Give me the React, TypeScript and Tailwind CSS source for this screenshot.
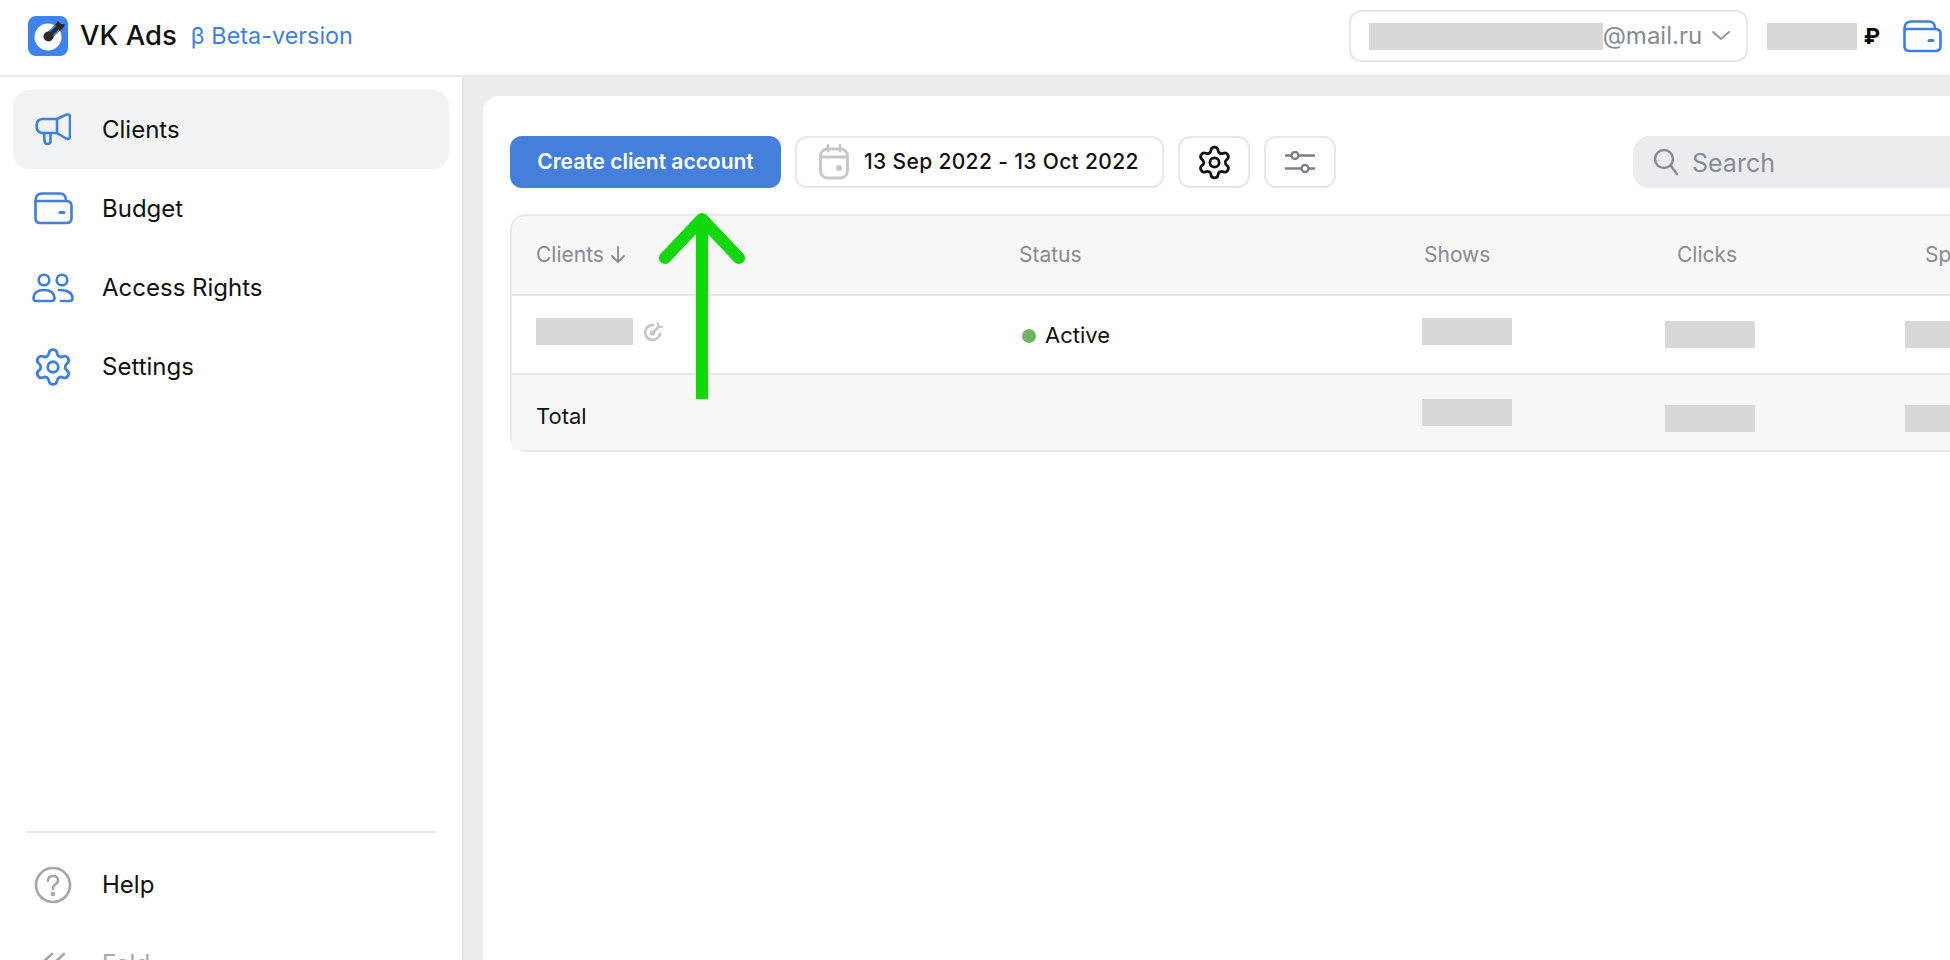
import React from "react";
import { Settings } from "lucide-react";

const Blue = "#3f7fe0";

function Logo() {
  return (
    <svg width="40" height="40" viewBox="0 0 40 40">
      <rect width="40" height="40" rx="8" fill="#3f84ec" />
      <circle cx="20" cy="21" r="13.5" fill="#fff" />
      <path d="M22 19 L33 8" stroke="#3f84ec" strokeWidth="8" />
      <path d="M21 20 L31 10" stroke="#2a2a2a" strokeWidth="4" strokeLinecap="round" />
      <circle cx="20.500" cy="20.500" r="5" fill="#2a2a2a" />
      <path d="M27 9 L30 5 L33 8 L37 8 L36 11 L32 15 Z" fill="#2a2a2a" />
    </svg>
  );
}

function Megaphone() {
  return (
    <svg width="36" height="33" viewBox="0 0 36 33" fill="none" stroke={Blue} strokeWidth="2.600" strokeLinejoin="round" strokeLinecap="round">
      <path d="M22 6 L31 1.800 Q35 0.500 35 4 V23 Q35 27 31 25.500 L22 20 Z" />
      <path d="M22 6 H8 Q1.500 6 1.500 13 Q1.500 20 8 20 H22" />
      <path d="M9 20 L9.500 28 Q10 31 12.500 31 Q15.500 31 15.500 28 L15.500 21" />
    </svg>
  );
}

function Wallet() {
  return (
    <svg width="39" height="33" viewBox="0 0 39 33" fill="none" stroke={Blue} strokeWidth="2.600" strokeLinejoin="round" strokeLinecap="round">
      <path d="M1.500 9 V26 Q1.500 31 6.500 31 H32.500 Q37.500 31 37.500 26 V14 Q37.500 9 32.500 9 H1.500" />
      <path d="M1.500 9 Q1.500 1.500 8 1.500 H26 Q32 1.500 32 9" />
      <path d="M26 20.500 H30" strokeWidth="3" />
    </svg>
  );
}

function People() {
  return (
    <svg width="42" height="30" viewBox="0 0 42 30" fill="none" stroke={Blue} strokeWidth="2.600" strokeLinecap="round" strokeLinejoin="round">
      <circle cx="12" cy="7" r="5.300" />
      <circle cx="30" cy="7" r="5.300" />
      <path d="M1.500 25 Q2 17 12 17 Q22 17 22.500 25 Q22.500 28 20 28 H4 Q1.500 28 1.500 25 Z" />
      <path d="M27 17 Q40 17 40.500 25 Q40.500 28 38 28 H29" />
    </svg>
  );
}

function Target() {
  return (
    <svg width="20" height="20" viewBox="0 0 20 20" fill="none" stroke="#c4c6ca" strokeWidth="2.800" strokeLinecap="round">
      <path d="M10 3 A7.500 7.500 0 1 0 17 12" />
      <circle cx="9.500" cy="11" r="2.800" fill="#c4c6ca" stroke="none" />
      <path d="M9.500 11 L16 4.500" />
      <path d="M15 1 L15.500 4.500 L19 5" strokeWidth="2" />
    </svg>
  );
}

function NavItem({ icon, label, active, muted }: { icon: React.ReactNode; label: string; active?: boolean; muted?: boolean }) {
  return (
    <div className={`flex h-[79px] shrink-0 items-center rounded-2xl pl-[19px] ${active ? "bg-[#f1f2f4]" : ""}`}>
      <div className="flex w-[42px] justify-center">{icon}</div>
      <span className={`ml-[28px] text-[24px] ${muted ? "text-[#a3a7ae]" : "text-[#111]"}`}>{label}</span>
    </div>
  );
}

function Redact({ className }: { className: string }) {
  return <div className={`h-[27px] shrink-0 bg-[#d8d8d8] ${className}`} />;
}

function Outline({ className, children }: { className: string; children: React.ReactNode }) {
  return <div className={`flex h-[52px] shrink-0 items-center rounded-xl border-2 border-[#e6e7eb] bg-white ${className}`}>{children}</div>;
}

const rowGrid = "grid grid-cols-[483px_405px_253px_248px_300px] items-center";

export default function App() {
  return (
    <div className="relative flex h-[960px] w-[1950px] flex-col overflow-hidden bg-white font-['Inter',sans-serif]">
      <header className="flex h-[77px] shrink-0 items-center border-b-2 border-[#e9eaee] bg-white pb-[3px] pl-7">
        <Logo />
        <span className="ml-[12px] text-[27.5px] font-medium text-[#111]">VK Ads</span>
        <span className="ml-[14px] text-[23.4px] text-[#3f7fe0]">β Beta-version</span>
        <Outline className="ml-auto w-[399px] pl-[18px]">
          <Redact className="w-[234px]" />
          <span className="text-[24px] text-[#868b94]">@mail.ru</span>
          <svg className="ml-[10px]" width="18" height="10" viewBox="0 0 18 10" fill="none" stroke="#8f939a" strokeWidth="1.800" strokeLinecap="round" strokeLinejoin="round">
            <path d="M1 1 L9 8 L17 1" />
          </svg>
        </Outline>
        <Redact className="ml-[19px] w-[90px]" />
        <span className="ml-[7px] text-[22px] font-bold text-black">₽</span>
        <div className="ml-[23px] mr-2">
          <Wallet />
        </div>
      </header>

      <div className="flex min-h-0 flex-1">
        <aside className="flex w-[464px] shrink-0 flex-col border-r-2 border-[#e3e4e9] bg-white px-[13px] pt-[13px]">
          <NavItem active icon={<Megaphone />} label="Clients" />
          <NavItem icon={<Wallet />} label="Budget" />
          <NavItem icon={<People />} label="Access Rights" />
          <NavItem icon={<Settings size={42} color={Blue} strokeWidth={1.600} />} label="Settings" />
          <div className="mx-[13px] mt-auto h-[2px] shrink-0 bg-[#e6e7ea]" />
          <div className="-mb-[43px] mt-[12px]">
            <NavItem
              icon={
                <svg width="38" height="38" viewBox="0 0 38 38" fill="none" stroke="#a3a7ae" strokeWidth="2.600" strokeLinecap="round">
                  <circle cx="19" cy="19" r="17" />
                  <path d="M14 15 Q14 10 19 10 Q24 10 24 14.500 Q24 17 21 18.500 Q19 20 19 23" />
                  <circle cx="19" cy="28" r="1" fill="#a3a7ae" />
                </svg>
              }
              label="Help"
            />
            <NavItem
              muted
              icon={
                <svg width="30" height="24" viewBox="0 0 30 24" fill="none" stroke="#a3a7ae" strokeWidth="2.600" strokeLinecap="round" strokeLinejoin="round">
                  <path d="M14 2 L3 12 L14 22" />
                  <path d="M26 2 L15 12 L26 22" />
                </svg>
              }
              label="Fold"
            />
          </div>
        </aside>

        <main className="min-w-0 flex-1 overflow-hidden bg-[#ebecf0] pl-[19px] pt-[19px]">
          <div className="h-full rounded-tl-2xl bg-white pl-[27px] pt-10">
            <div className="flex items-center">
              <div className="flex h-[52px] w-[271px] shrink-0 items-center justify-center whitespace-nowrap rounded-xl bg-[#447fdb] text-[21px] font-semibold text-white">
                Create client account
              </div>
              <Outline className="ml-[14px] w-[369px] pl-[22px]">
                <svg width="30" height="36" viewBox="0 0 30 36" fill="none" stroke="#c5c7cb" strokeWidth="2.800" strokeLinecap="round" strokeLinejoin="round">
                  <rect x="1.500" y="5" width="27" height="29" rx="7" />
                  <path d="M1.500 13 H28.500" />
                  <path d="M9 1.500 V7 M21 1.500 V7" />
                  <circle cx="20" cy="24" r="1.600" fill="#c5c7cb" />
                </svg>
                <span className="ml-[15px] whitespace-nowrap text-[21px] font-medium tracking-[0.35px] text-[#111]">13 Sep 2022 - 13 Oct 2022</span>
              </Outline>
              <Outline className="ml-[14px] w-[72px] justify-center">
                <Settings size={37} color="#111" strokeWidth={1.800} />
              </Outline>
              <Outline className="ml-[14px] w-[72px] justify-center">
                <svg width="30" height="22" viewBox="0 0 30 22" fill="none" stroke="#7b7f86" strokeWidth="2.400">
                  <path d="M0 4.500 H6 M14 4.500 H30 M0 17.500 H16 M24 17.500 H30" />
                  <circle cx="10" cy="4.500" r="3.500" />
                  <circle cx="20" cy="17.500" r="3.500" />
                </svg>
              </Outline>
              <div className="ml-[297px] flex h-[52px] w-[500px] shrink-0 items-center rounded-l-2xl bg-[#ebecf0] pl-[20px]">
                <svg width="26" height="28" viewBox="0 0 26 28" fill="none" stroke="#868b94" strokeWidth="2.400" strokeLinecap="round">
                  <circle cx="11" cy="11" r="9" />
                  <path d="M18 18 L24 26" />
                </svg>
                <span className="ml-[13px] pt-[3px] text-[25px] text-[#868b94]">Search</span>
              </div>
            </div>

            <div className="mt-[26px] w-[1600px] rounded-l-2xl border-2 border-r-0 border-[#e6e7eb]">
              <div className={`${rowGrid} h-[78px] rounded-tl-2xl bg-[#f7f7f8] pl-[24px] text-[21px] text-[#868b94]`}>
                <div className="flex items-center">
                  Clients
                  <svg className="ml-[7px]" width="14" height="18" viewBox="0 0 14 18" fill="none" stroke="#868b94" strokeWidth="1.800" strokeLinecap="round" strokeLinejoin="round">
                    <path d="M7 1 V16 M1 10 L7 16 L13 10" />
                  </svg>
                </div>
                <div>Status</div>
                <div>Shows</div>
                <div>Clicks</div>
                <div>Spent</div>
              </div>
              <div className={`${rowGrid} h-[79px] border-t-2 border-[#e6e7eb] pl-[24px] text-[22px] text-[#111]`}>
                <div className="flex items-center pb-[6px]">
                  <Redact className="w-[97px]" />
                  <div className="ml-[10px]">
                    <Target />
                  </div>
                </div>
                <div className="flex items-center pt-[2px]">
                  <span className="ml-[3px] h-[14px] w-[14px] rounded-full bg-[#6eb562]" />
                  <span className="ml-[9px] text-[22px]">Active</span>
                </div>
                <div className="pb-[6px]">
                  <Redact className="-ml-[2px] w-[90px]" />
                </div>
                <div>
                  <Redact className="-ml-[12px] w-[90px]" />
                </div>
                <div>
                  <Redact className="-ml-[20px] w-[90px]" />
                </div>
              </div>
              <div className={`${rowGrid} h-[77px] border-t-2 border-[#e6e7eb] bg-[#f7f7f8] pl-[24px] text-[22px] text-[#111]`}>
                <div className="pt-[7px]">Total</div>
                <div />
                <div>
                  <Redact className="-ml-[2px] w-[90px]" />
                </div>
                <div className="pt-[11px]">
                  <Redact className="-ml-[12px] w-[90px]" />
                </div>
                <div className="pt-[11px]">
                  <Redact className="-ml-[20px] w-[90px]" />
                </div>
              </div>
            </div>
          </div>
        </main>
      </div>

      <svg className="pointer-events-none absolute left-[651px] top-[205px]" width="100" height="200" viewBox="0 0 100 200" fill="none" stroke="#10d80a" strokeWidth="12">
        <path d="M51 14 V194" />
        <path d="M14 53 L51 14 L88 53" strokeLinecap="round" strokeLinejoin="round" />
      </svg>
    </div>
  );
}
